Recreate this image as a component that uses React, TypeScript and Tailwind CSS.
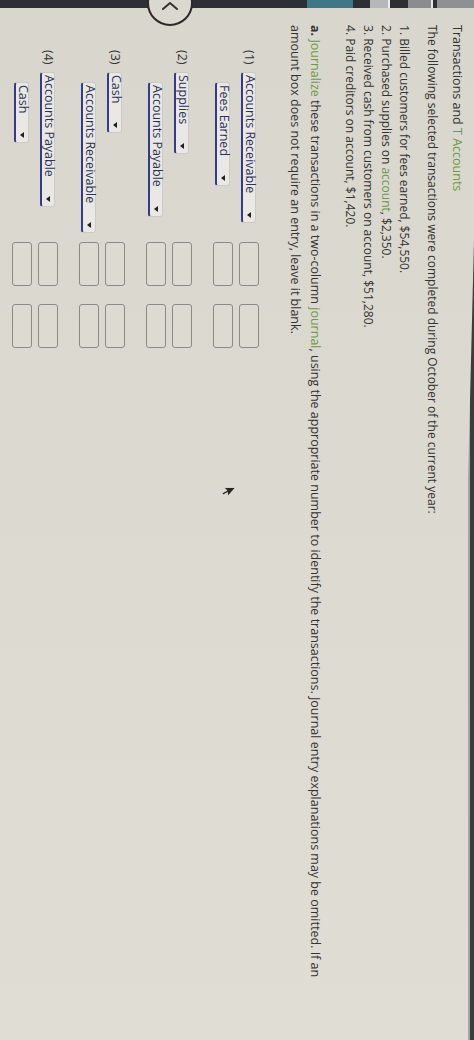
import React from 'react';

// The reference is a phone photo of the page turned 90° clockwise,
// so the page is laid out at 1040x474 and turned as a whole.

const ENTRIES = [
  { n: 1, debit: 'Accounts Receivable', credit: 'Fees Earned' },
  { n: 2, debit: 'Supplies', credit: 'Accounts Payable' },
  { n: 3, debit: 'Cash', credit: 'Accounts Receivable' },
  { n: 4, debit: 'Accounts Payable', credit: 'Cash' },
];

const ITEMS = [
  <>Billed customers for fees earned, $54,550.</>,
  <>Purchased supplies on <span className="text-[#6c9a45]">account</span>, $2,350.</>,
  <>Received cash from customers on account, $51,280.</>,
  <>Paid creditors on account, $1,420.</>,
];

// bits of the taskbar that show along the photo edge
const DOCK = [
  { h: 'h-[37px]', c: 'bg-[#8e9193]' },
  { h: 'h-[4px]', c: 'bg-[#2c3036]' },
  { h: 'h-[2px]', c: 'bg-[#e6e6e6]' },
  { h: 'h-[23px]', c: 'bg-[#8a8d8f]' },
  { h: 'h-[18px]', c: 'bg-[#2c3036]' },
  { h: 'h-[2px]', c: 'bg-[#eeeeee]' },
  { h: 'h-[18px]', c: 'bg-[#b4b8bb]' },
  { h: 'h-[17px]', c: 'bg-[#2c3036]' },
  { h: 'h-[46px]', c: 'bg-[#3c7886]' },
];

function Caret() {
  return (
    <svg width="6" height="4" viewBox="0 0 6 4" className="shrink-0" aria-hidden="true">
      <path d="M0 0 L6 0 L3 4 Z" fill="#1f1f1f" />
    </svg>
  );
}

function AccountSelect({ label }: { label: string }) {
  return (
    <div className="inline-flex items-center h-[15px] pl-[2px] pr-[4px] gap-[19px] rounded-[3px] border border-[#cdcac4] border-b-2 border-b-[#353b8c] bg-[#e9e8e4] text-[12.5px] leading-none text-[#2c3256]">
      <span>{label}</span>
      <Caret />
    </div>
  );
}

function AmountBox() {
  return <div className="w-[44px] h-[20px] rounded-[3px] border-[1.5px] border-[#8d8985] bg-[#dddad2]" />;
}

function JournalRow({ tag, account, indent }: { tag?: number; account: string; indent?: boolean }) {
  return (
    <div className="flex items-center h-[20px]">
      <div className="w-[47px] pl-[25px] shrink-0 text-[12.5px] text-[#333]">{tag ? `(${tag})` : ''}</div>
      <div className={`w-[170px] shrink-0 flex ${indent ? 'pl-[10px]' : ''}`}>
        <AccountSelect label={account} />
      </div>
      <div className="flex gap-[18px]">
        <AmountBox />
        <AmountBox />
      </div>
    </div>
  );
}

export default function App() {
  return (
    <div className="w-[474px] h-[1040px] overflow-hidden bg-[#dcd9d0]">
      <div className="relative w-[1040px] h-[474px] origin-top-left [transform:translateX(474px)_rotate(90deg)] flex bg-gradient-to-r from-[#d9d6cd] to-[#e0ddd5] font-['Open_Sans',sans-serif] text-[12px] text-[#333333]">
        {/* photo edge: taskbar */}
        <div className="w-[8px] shrink-0 flex flex-col bg-[#2c3036]">
          {DOCK.map((d, i) => (
            <div key={i} className={`${d.h} ${d.c}`} />
          ))}
        </div>

        <div className="flex-1 pl-[17px] pr-[30px] pt-[8px]">
          <h1 className="text-[12.5px] leading-[18px] font-normal">
            Transactions and <span className="text-[#6c9a45]">T Accounts</span>
          </h1>
          <p className="mt-[7px] leading-[18px]">
            The following selected transactions were completed during October of the current year:
          </p>
          <ol className="mt-[10px] leading-[18px]">
            {ITEMS.map((it, i) => (
              <li key={i}>
                {i + 1}. {it}
              </li>
            ))}
          </ol>
          <p className="mt-[16px] text-[12.5px] leading-[20px]">
            <span className="font-bold">a.</span> <span className="text-[#6c9a45]">Journalize</span> these
            transactions in a two-column <span className="text-[#6c9a45]">journal</span>, using the appropriate
            number to identify the transactions. Journal entry explanations may be omitted. If an amount box
            does not require an entry, leave it blank.
          </p>

          <div className="mt-[26px] flex flex-col gap-[21px]">
            {ENTRIES.map(e => (
              <div key={e.n} className="flex flex-col gap-[6px]">
                <JournalRow tag={e.n} account={e.debit} />
                <JournalRow account={e.credit} indent />
              </div>
            ))}
          </div>
        </div>

        {/* back button cut off by the photo edge */}
        <div className="absolute left-[-20px] top-[281px] w-[46px] h-[46px] rounded-full border-2 border-[#2a2a2a] bg-[#dbd8cf] flex items-center justify-end pr-[13px]">
          <svg width="10" height="16" viewBox="0 0 10 16" fill="none" stroke="#333" strokeWidth="2" strokeLinecap="round" strokeLinejoin="round">
            <path d="M8 1 L2 8 L8 15" />
          </svg>
        </div>

        {/* monitor bezel along the top */}
        <div className="absolute top-0 left-[240px] right-0 h-[6px] flex flex-col [clip-path:polygon(0_0,100%_0,100%_100%,30%_100%)]">
          <div className="flex-1 bg-[#3b3c3e]" />
          <div className="h-[2px] bg-[#a3a3a3]" />
        </div>

        {/* mouse pointer */}
        <svg className="absolute left-[487px] top-[238px]" width="10" height="15" viewBox="0 0 10 15" aria-hidden="true">
          <path d="M0.5 0.5 L0.5 12 L3.5 9 L6 14 L8 13 L5.5 8.5 L9.5 8.5 Z" fill="#262626" stroke="#e8e6e0" strokeWidth="0.8" />
        </svg>
      </div>
    </div>
  );
}
